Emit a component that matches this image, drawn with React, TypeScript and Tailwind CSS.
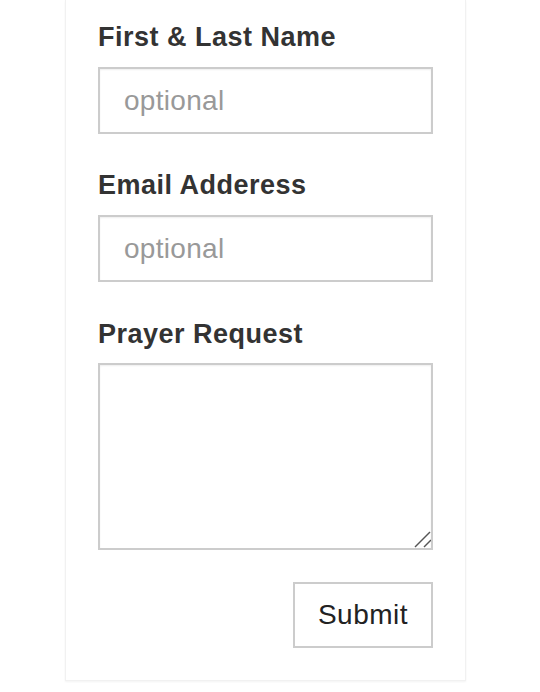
import React from "react";

export default function App() {
  const font = { fontFamily: '"Liberation Sans", Arial, Helvetica, sans-serif' };
  return (
    <div className="w-[540px] h-[692px] bg-white overflow-hidden" style={font}>
      <div className="ml-[65px] w-[401px] h-[681px] border-x border-b border-[#f1f1f1] shadow-[0_1px_2px_rgba(0,0,0,0.05)] bg-white pl-[32px] pr-[32px] pt-[21px]">
        <form className="flex flex-col" onSubmit={(e) => e.preventDefault()}>
          <label className="block text-[27px] leading-[32px] font-bold tracking-[0.5px] text-[#333]">First &amp; Last Name</label>
          <input
            type="text"
            placeholder="optional"
            className="mt-[14px] w-[335px] h-[67px] border-2 border-[#cccccc] bg-white px-[24px] text-[28px] tracking-[0.3px] text-[#333] placeholder:text-[#999] shadow-[inset_0_1px_2px_rgba(0,0,0,0.07)] outline-none"
          />
          <label className="block mt-[35px] text-[27px] leading-[32px] font-bold tracking-[0.5px] text-[#333]">Email Adderess</label>
          <input
            type="text"
            placeholder="optional"
            className="mt-[14px] w-[335px] h-[67px] border-2 border-[#cccccc] bg-white px-[24px] text-[28px] tracking-[0.3px] text-[#333] placeholder:text-[#999] shadow-[inset_0_1px_2px_rgba(0,0,0,0.07)] outline-none"
          />
          <label className="block mt-[36px] text-[27px] leading-[32px] font-bold tracking-[0.5px] text-[#333]">Prayer Request</label>
          <div className="relative mt-[13px] w-[335px] h-[187px]">
            <textarea
              className="block w-[335px] h-[187px] resize-none border-2 border-[#cccccc] bg-white px-[24px] py-[12px] text-[26px] text-[#333] shadow-[inset_0_1px_2px_rgba(0,0,0,0.07)] outline-none"
            />
            <svg
              className="absolute right-[2px] bottom-[2px] pointer-events-none"
              width="18"
              height="18"
              viewBox="0 0 18 18"
            >
              <line x1="2" y1="17" x2="17" y2="2" stroke="#555" strokeWidth="1.4" />
              <line x1="11" y1="17" x2="18" y2="10" stroke="#555" strokeWidth="1.4" />
            </svg>
          </div>
          <div className="flex justify-end mt-[32px] w-[335px]">
            <button
              type="submit"
              className="w-[140px] h-[66px] border-2 border-[#cccccc] bg-white text-[28px] tracking-[0.5px] text-[#222]"
            >
              Submit
            </button>
          </div>
        </form>
      </div>
    </div>
  );
}
